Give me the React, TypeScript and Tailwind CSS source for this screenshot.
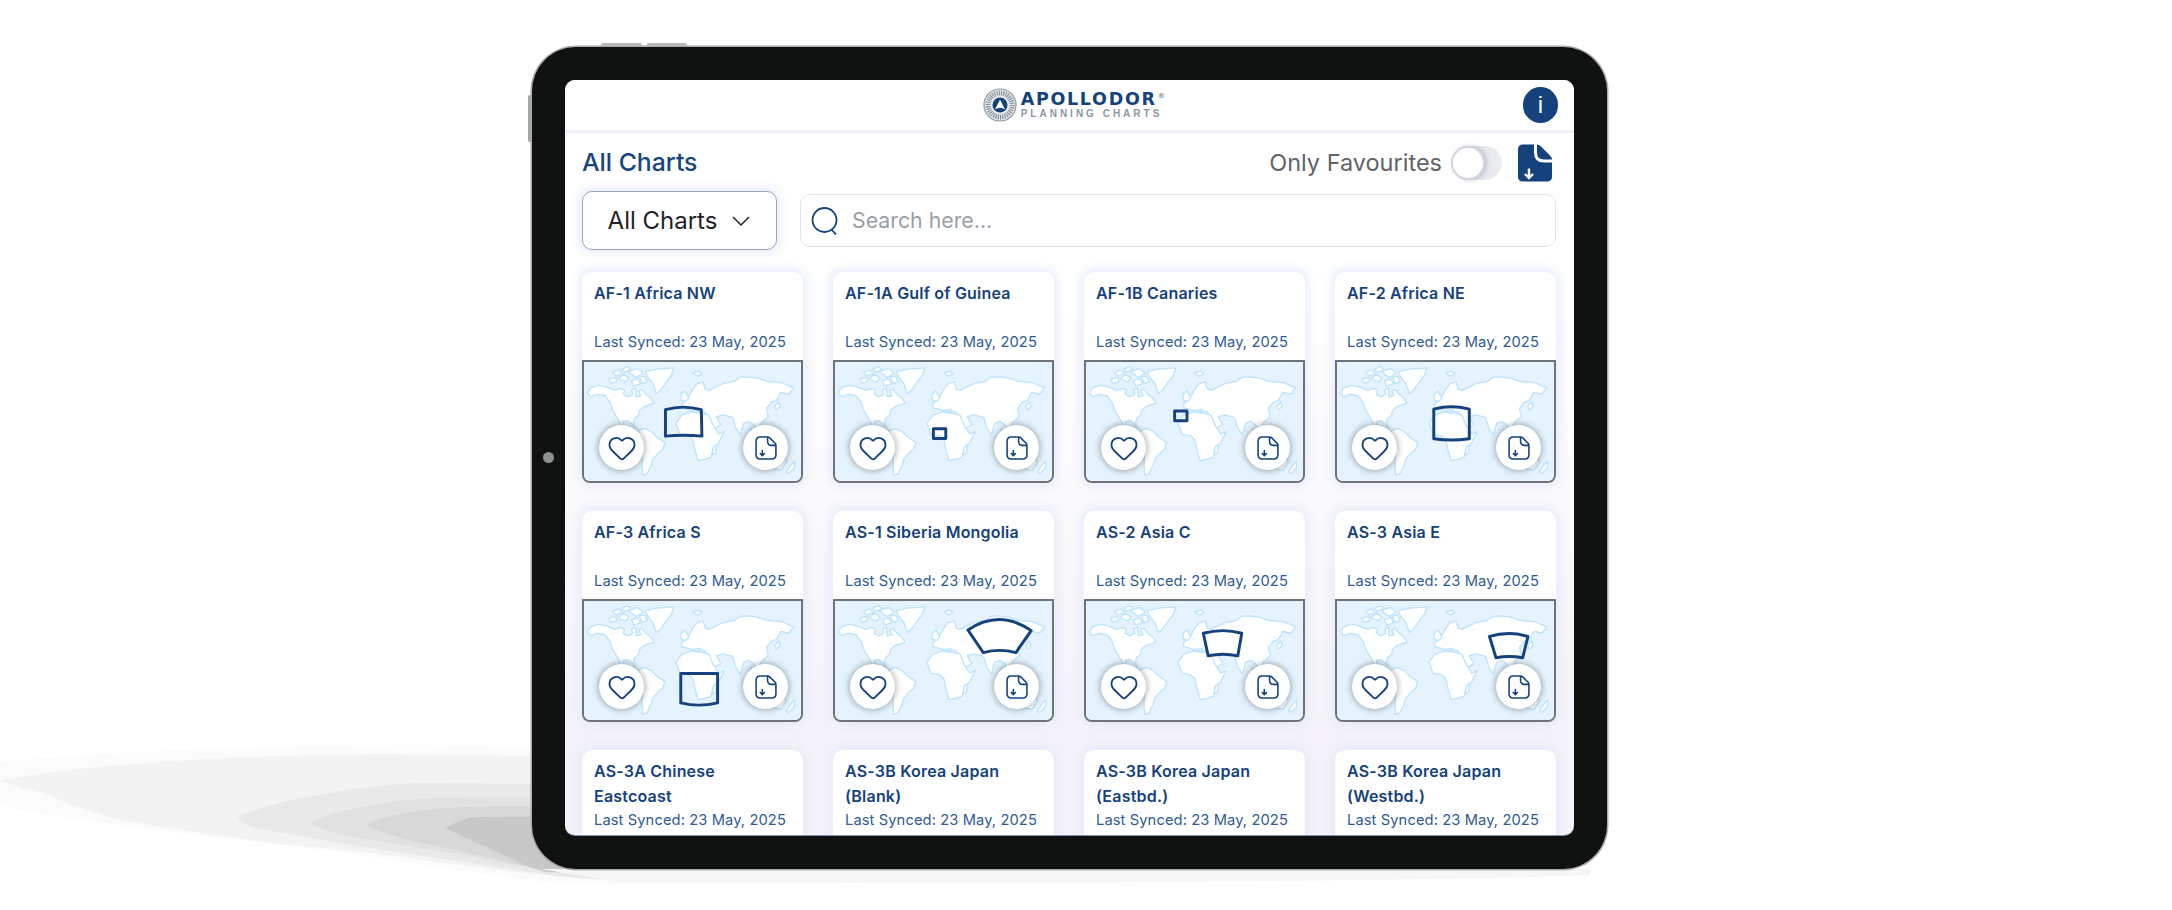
import { Heart } from 'lucide-react';

const navy = '#15427c';

const charts = [
  { name: 'AF-1 Africa NW', frame: 'M250 148Q305 132 360 148L362 230Q305 224 250 230Z' },
  { name: 'AF-1A Gulf of Guinea', frame: 'M302 207H340V237H302Z' },
  { name: 'AF-1B Canaries', frame: 'M272 152H310V182H272Z' },
  { name: 'AF-2 Africa NE', frame: 'M297 146Q350 132 406 146L406 238Q350 246 297 238Z' },
  { name: 'AF-3 Africa S', frame: 'M297 225H410V316Q352 330 297 316Z' },
  { name: 'AS-1 Siberia Mongolia', frame: 'M408 90Q505 24 602 92L555 160Q505 146 455 160Z' },
  { name: 'AS-2 Asia C', frame: 'M360 100Q420 84 478 100L466 170Q420 160 375 170Z' },
  { name: 'AS-3 Asia E', frame: 'M468 110Q528 92 586 110L570 176Q528 168 488 176Z' },
  { name: 'AS-3A Chinese Eastcoast', frame: '' },
  { name: 'AS-3B Korea Japan (Blank)', frame: '' },
  { name: 'AS-3B Korea Japan (Eastbd.)', frame: '' },
  { name: 'AS-3B Korea Japan (Westbd.)', frame: '' },
];

const land = [
  // north america
  'M10 95L20 80L45 72L70 78L95 88L112 82L125 88L120 100L135 108L150 100L146 88L158 80L160 108L175 105L168 90L178 85L190 100L205 112L215 128L196 134L182 140L170 150L168 165L155 175L152 190L158 206L148 192L135 182L120 185L124 204L140 212L152 218L135 210L115 196L100 170L88 150L80 125L65 105L40 100L20 108Z',
  // south america
  'M166 214L186 206L206 216L222 232L248 250L242 270L226 284L212 300L206 320L194 346L180 352L178 318L180 286L166 262L158 238Z',
  // greenland
  'M188 30L222 22L276 18L268 42L252 62L234 88L222 98L212 68L196 48Z',
  // eurasia
  'M300 130L314 116L306 104L322 106L334 84L346 68L366 62L372 84L384 88L404 78L430 66L462 60L478 48L500 46L534 50L560 60L606 64L644 80L628 100L604 94L590 120L576 124L560 144L566 170L546 186L532 214L520 194L506 184L490 190L480 226L466 206L456 172L426 164L406 170L420 194L400 206L382 170L370 154L346 150L330 150L318 146L300 142Z',
  // africa
  'M282 190L300 165L330 155L366 160L384 165L396 196L414 224L430 216L414 250L396 270L390 296L370 302L350 306L340 270L334 240L320 228L295 225Z',
  // uk
  'M298 100L310 90L322 112L312 122L298 118Z',
  // iceland
  'M334 34L352 28L362 36L348 44Z',
  // canada islands
  'M104 52L122 38L138 50L128 62Z',
  'M136 30L164 20L182 34L160 48Z',
  'M146 58L164 52L174 68L152 74Z',
  'M88 32L106 24L118 36L98 44Z',
  'M116 22L134 14L144 24L124 32Z',
  'M76 52L98 48L100 62L82 66Z',
  'M170 46L186 44L194 62L178 66Z',
  // mediterranean islands
  'M340 150L356 146L352 156Z',
  // madagascar
  'M396 264L406 256L404 282L394 288Z',
  // japan
  'M586 136L598 124L602 138L590 150Z',
  // indonesia
  'M512 206L530 226L522 232L508 216Z',
  'M546 222L566 218L572 236L552 240Z',
  'M574 240L612 238L618 252L586 254Z',
  // australia
  'M540 290L570 270L600 276L622 310L604 336L562 326L540 326Z',
  // new zealand
  'M636 318L646 308L646 328L628 346L622 340Z',
];

function WorldMap({ frame }: { frame: string }) {
  return (
    <svg viewBox="0 0 666 369" preserveAspectRatio="none" className="absolute inset-0 h-full w-full">
      <rect width="666" height="369" fill="#e4f3fe" />
      <g fill="#ffffff" stroke="#bde3fb" strokeWidth="4" strokeLinejoin="round">
        {land.map((d, i) => (
          <path key={i} d={d} />
        ))}
      </g>
      {frame && <path d={frame} fill="none" stroke={navy} strokeWidth="9" strokeLinejoin="round" />}
    </svg>
  );
}

function DocIcon() {
  return (
    <svg width="22" height="24" viewBox="0 0 21 23" fill="none" stroke={navy} strokeWidth="1.5" strokeLinejoin="round" strokeLinecap="round">
      <path d="M12 1H4.5A3.5 3.5 0 0 0 1 4.5V18.5A3.5 3.5 0 0 0 4.5 22H16.5A3.5 3.5 0 0 0 20 18.5V9C20 8 19.6 7.3 19 6.700L14.300 2C13.700 1.400 13 1 12 1V5Q12 9 16 9H20" />
      <path d="M7 14V18.500M5 16.800L7 18.800L9 16.800" />
    </svg>
  );
}

function ChartCard({ name, frame }: { name: string; frame: string }) {
  return (
    <div className="rounded-[10px] bg-white shadow-[0_0_9px_4px_rgba(226,234,248,0.75)]">
      <div className="px-[12px] pt-[9px] pb-[7px]">
        <h3 className="h-[50px] text-[16px] leading-[25px] font-semibold tracking-[0.2px] text-[#15427c]">{name}</h3>
        <p className="text-[14.700px] leading-[22px] tracking-[0.1px] whitespace-nowrap text-[#2f5b92]">Last Synced: 23 May, 2025</p>
      </div>
      <div className="relative h-[123px] overflow-hidden rounded-b-[8px] border-2 border-[#6f7377]">
        <WorldMap frame={frame} />
        <button className="absolute top-[63px] left-[15px] flex h-[45px] w-[45px] items-center justify-center rounded-full bg-white shadow-[0_0_6px_1px_rgba(0,0,0,0.32)]">
          <Heart size={30} strokeWidth={1.5} color={navy} />
        </button>
        <button className="absolute top-[63px] right-[13px] flex h-[45px] w-[45px] items-center justify-center rounded-full bg-white shadow-[0_0_6px_1px_rgba(0,0,0,0.32)]">
          <DocIcon />
        </button>
      </div>
    </div>
  );
}

function Logo() {
  return (
    <div className="ml-[6px] flex items-center gap-[4px]">
      <svg width="34" height="36" viewBox="0 0 34 36">
        <circle cx="17" cy="18" r="16" fill="#e9ebee" stroke="#8d979f" strokeWidth="1.200" />
        <circle cx="17" cy="18" r="12" fill="none" stroke="#7f8a94" strokeWidth="5" strokeDasharray="1.100 1.100" />
        <circle cx="17" cy="18" r="7.500" fill={navy} />
        <path d="M17 12.500L22 22.500Q17 19 12 22.500Z" fill="#ffffff" />
      </svg>
      <div className="flex flex-col">
        <div className="relative font-['DejaVu_Sans',sans-serif] text-[17.500px] leading-[16px] font-bold tracking-[1.700px] text-[#15427c]">
          APOLLODOR
          <span className="absolute top-[-3px] ml-[1px] text-[7px] tracking-normal text-[#7d8b9b]">®</span>
        </div>
        <div className="mt-[2px] font-['Liberation_Sans',sans-serif] text-[10px] leading-[10px] font-bold tracking-[3px] whitespace-nowrap text-[#8b97a3]">PLANNING CHARTS</div>
      </div>
    </div>
  );
}

function GroundShadow() {
  return (
    <svg width="2172" height="910" className="absolute inset-0" fill="none">
      <path d="M0 762C100 752 260 745 428 745L640 750V884H560C420 866 330 848 214 838C150 828 60 818 0 806Z" fill="#fbfbfb" />
      <path d="M0 780L54 772C110 764 250 754 393 754L640 757V880H600C470 870 380 850 286 845C220 836 170 828 125 821C100 815 90 810 71 805C50 796 40 790 21 788Z" fill="#f3f3f3" />
      <path d="M237 818C250 810 280 802 303 798C350 788 400 783 428 783L640 785V880C600 880 580 878 557 876L464 862L357 846L250 827Z" fill="#e9e9e9" />
      <path d="M311 823C325 815 340 811 357 808C390 801 420 798 446 798L640 797V878L550 872L464 855L357 838C335 833 318 829 311 823Z" fill="#e1e1e1" />
      <path d="M366 825C380 818 395 815 410 812C450 806 490 806 640 806V874L540 870L500 860L410 840C390 835 375 830 366 825Z" fill="#d8d8d8" />
      <path d="M446 828C455 822 465 818 475 817L640 816V874L545 872L525 865L482 845C465 838 455 833 446 828Z" fill="#c8c8c8" />
      <path d="M540 869H1590V875C1400 883 800 884 620 882Z" fill="#f6f6f6" />
    </svg>
  );
}

export default function App() {
  return (
    <div className="relative h-[910px] w-full overflow-hidden bg-white pt-[47px] pl-[532px] font-['Inter',sans-serif]">
      <GroundShadow />
      <div className="relative h-[822px] w-[1075px]">
        {/* hardware buttons */}
        <div className="absolute top-[-4px] left-[69px] h-[5px] w-[41px] rounded-t-[2px] bg-[#b8babc]" />
        <div className="absolute top-[-4px] left-[115px] h-[5px] w-[40px] rounded-t-[2px] bg-[#b8babc]" />
        <div className="absolute top-[48px] left-[-4px] h-[47px] w-[4px] rounded-l-[2px] bg-[#a4a6a8]" />

        <div className="relative h-full rounded-[44px] bg-[#101211] p-[33px] shadow-[0_0_0_1.500px_#a9acaf]">
          <div className="absolute top-[405px] left-[11px] h-[11px] w-[11px] rounded-full bg-[#8f9193]" />
          <div className="flex h-full flex-col overflow-hidden rounded-[10px] border-b border-[#7d96ba] bg-gradient-to-b from-white from-30% to-[#f5f3f9] to-85%">
            <header className="grid h-[53px] shrink-0 grid-cols-[1fr_auto_1fr] items-center border-b-[3px] border-[#eef1f7] bg-white">
              <div />
              <Logo />
              <div className="flex justify-end pr-[16px]">
                <div className="flex h-[36px] w-[35px] items-center justify-center rounded-full bg-[#15427c]">
                  <span className="font-['Liberation_Sans',sans-serif] text-[24px] leading-none text-white">i</span>
                </div>
              </div>
            </header>

            <div className="flex flex-col pr-[18px] pl-[17px]">
              <div className="mt-[11px] flex h-[38px] items-center justify-between pr-[4px]">
                <h1 className="text-[24.800px] font-medium text-[#17457f]">All Charts</h1>
                <div className="flex items-center">
                  <span className="text-[23.500px] text-[#5f6368]">Only Favourites</span>
                  <div className="ml-[9px] h-[34px] w-[51px] rounded-full bg-gradient-to-r from-[#d8dce2] to-[#eceef2]">
                    <div className="h-[34px] w-[34px] rounded-full border-2 border-[#d4d8de] bg-white shadow-[2px_0_4px_rgba(120,130,145,0.35)]" />
                  </div>
                  <svg className="ml-[16px]" width="34" height="38" viewBox="0 0 34 37">
                    <path d="M5 0H16V8Q16 18 26 18H34V32Q34 37 29 37H5Q0 37 0 32V5Q0 0 5 0Z" fill={navy} />
                    <path d="M19 0Q21 0 23 2L32 11Q34 13 34 15H26Q19 15 19 8Z" fill={navy} />
                    <path d="M11 24V33M7 29.500L11 33.500L15 29.500" stroke="#ffffff" strokeWidth="2.400" fill="none" />
                  </svg>
                </div>
              </div>

              <div className="mt-[9px] flex items-center gap-[23px]">
                <button className="flex h-[59px] w-[195px] items-center justify-center gap-[14px] rounded-[10px] border border-[#9aa7bd] bg-white text-[24px] text-[#1f2328] shadow-[0_0_8px_4px_rgba(226,234,248,0.7)]">
                  All Charts
                  <svg width="20" height="12" viewBox="0 0 20 12" fill="none" stroke="#1f2328" strokeWidth="1.500">
                    <path d="M2 2L10 10L18 2" />
                  </svg>
                </button>
                <div className="flex h-[53px] flex-1 items-center gap-[13px] rounded-[10px] border border-[#dfe5f0] bg-white pl-[10px]">
                  <svg width="28" height="28" viewBox="0 0 28 28" fill="none" stroke={navy} strokeWidth="1.800">
                    <circle cx="13.500" cy="13" r="12" />
                    <path d="M21 23L25 27.500" />
                  </svg>
                  <span className="text-[21.300px] text-[#9aa0a8]">Search here...</span>
                </div>
              </div>

              <div className="mt-[22px] grid grid-cols-4 gap-x-[30px] gap-y-[28px]">
                {charts.map((c) => (
                  <ChartCard key={c.name} name={c.name} frame={c.frame} />
                ))}
              </div>
            </div>
          </div>
        </div>
      </div>
    </div>
  );
}
